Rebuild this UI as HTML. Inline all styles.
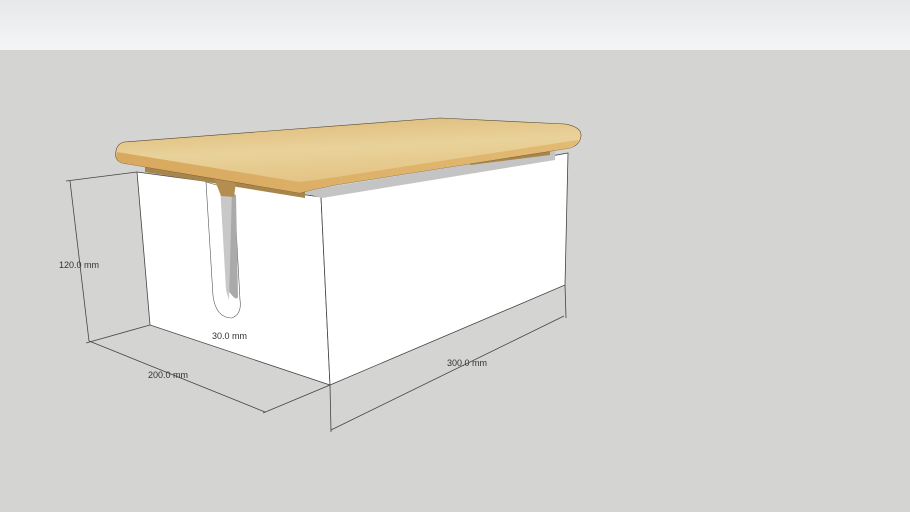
<!DOCTYPE html>
<html><head><meta charset="utf-8"><style>
html,body{margin:0;padding:0;width:910px;height:512px;overflow:hidden;background:#d4d4d2}
svg{display:block}
text{font-family:"Liberation Sans",sans-serif;font-size:9px;fill:#333}
</style></head><body>
<svg width="910" height="512" viewBox="0 0 910 512">
<defs>
<linearGradient id="sky" x1="0" y1="0" x2="0" y2="1"><stop offset="0" stop-color="#e6e8ea"/><stop offset="1" stop-color="#f4f5f6"/></linearGradient>
<linearGradient id="wood" x1="0" y1="0" x2="0.3" y2="1"><stop offset="0" stop-color="#dcb674"/><stop offset="0.5" stop-color="#e9d29a"/><stop offset="1" stop-color="#e2c07e"/></linearGradient>
<linearGradient id="woodf" x1="0" y1="0" x2="1" y2="0"><stop offset="0" stop-color="#d8a85e"/><stop offset="1" stop-color="#e2ba72"/></linearGradient>
</defs>
<rect width="910" height="50" fill="url(#sky)"/>
<rect y="50" width="910" height="462" fill="#d4d4d2"/>
<g stroke="#444" stroke-width="0.8" fill="none">
<line x1="137" y1="172" x2="66" y2="181"/>
<line x1="150" y1="325" x2="86" y2="343"/>
<line x1="70" y1="181" x2="89" y2="341"/>
<line x1="89" y1="341" x2="265" y2="412"/>
<line x1="330" y1="385" x2="263" y2="413"/>
<line x1="330" y1="385" x2="331" y2="432"/>
<line x1="565" y1="285" x2="566" y2="318"/>
<line x1="331" y1="430" x2="564" y2="316"/>
</g>
<polygon points="137,172 321,197 330,385 150,325" fill="#fff" stroke="#444" stroke-width="0.8"/>
<polygon points="321,197 568,153 565,285 330,385" fill="#fff" stroke="#444" stroke-width="0.8"/>
<path d="M206,182 L213,296 Q216,318 232,318 Q242,314 240,300 L234,190 Z" fill="#fff" stroke="#555" stroke-width="0.6"/>
<path d="M221,190 L228,290 Q236,302 238,297 L236,195 Z" fill="#aaa"/>
<path d="M220,185 L226,290 L229,300 L232,190 Z" fill="#c8c8c8"/>
<polygon points="300,192 555,150 555,160 322,198" fill="#c4c4c4"/>
<polygon points="145,163 305,190 305,198 145,172" fill="#a8854a"/>
<polygon points="470,160 550,148 550,155 470,165" fill="#a8854a"/>
<polygon points="214,178 236,182 234,197 221,196" fill="#b38e50"/>
<path d="M124,142 L440,118 L565,124 Q582,127 581,136 Q580,145 570,148 L335,185 Q322,188 315,189 L300,193 L122,163 Q114,160 116,151 Q117,144 124,142 Z" fill="url(#wood)" stroke="#5a4a30" stroke-width="0.6"/>
<path d="M117,152 L300,182 L330,178 L578,140 Q577,146 570,148 L335,185 Q322,188 315,189 L300,193 L122,163 Q114,160 117,152 Z" fill="url(#woodf)"/>
<text x="59" y="268">120.0 mm</text>
<text x="148" y="378">200.0 mm</text>
<text x="212" y="339">30.0 mm</text>
<text x="447" y="366">300.0 mm</text>
</svg>
</body></html>
